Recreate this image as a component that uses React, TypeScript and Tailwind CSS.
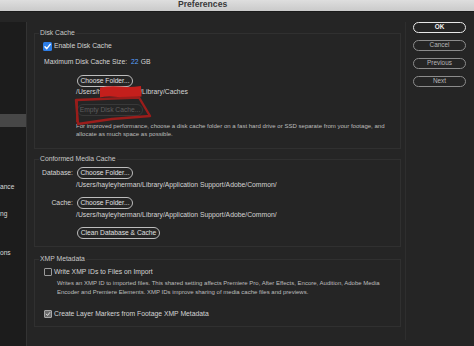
import React from "react";

const Check = ({ color }: { color: string }) => (
  <svg viewBox="0 0 10 10" className="w-full h-full">
    <path d="M2.2 5.2 L4.2 7.4 L8 2.6" fill="none" stroke={color} strokeWidth="1.6" strokeLinecap="round" strokeLinejoin="round" />
  </svg>
);

const Pill = ({ children, w, disabled }: { children: React.ReactNode; w: string; disabled?: boolean }) => (
  <div
    className={`${w} h-[12px] rounded-full border flex items-center justify-center text-[6.7px] leading-none whitespace-nowrap ${
      disabled ? "border-[#383838] text-[#5e5e5e]" : "border-[#bdbdbd] text-[#e0e0e0]"
    }`}
  >
    {children}
  </div>
);

const SideBtn = ({ children, primary }: { children: React.ReactNode; primary?: boolean }) => (
  <div
    className={`w-[53px] h-[11px] rounded-full border flex items-center justify-center text-[6.4px] leading-none ${
      primary ? "border-[#e8e8e8] text-[#f2f2f2] font-bold" : "border-[#8c8c8c] text-[#b8b8b8]"
    }`}
  >
    {children}
  </div>
);

export default function App() {
  return (
    <div
      className="relative w-[474px] h-[346px] overflow-hidden bg-[#252525] flex flex-col"
      style={{ fontFamily: '"Liberation Sans", Arial, sans-serif' }}
    >
      {/* title bar */}
      <div className="h-[12px] shrink-0 bg-gradient-to-b from-[#dedede] to-[#cacaca] border-b border-[#1a1a1a] pl-[178px] text-[8.6px] leading-[9px] font-bold text-[#3a3a3a]">
        Preferences
      </div>

      <div className="flex flex-1 min-h-0">
        {/* sidebar */}
        <div className="w-[27px] shrink-0 mt-[10px] bg-[#1c1c1c] border-r border-[#333] flex flex-col text-[6.6px] text-[#d8d8d8] leading-[12px]">
          <div className="h-[92px]" />
          <div className="h-[13px] bg-[#474747]" />
          <div className="h-[54px]" />
          <div className="h-[12px] whitespace-nowrap">ance</div>
          <div className="h-[15px]" />
          <div className="h-[12px] whitespace-nowrap">ng</div>
          <div className="h-[27px]" />
          <div className="h-[12px] whitespace-nowrap">ons</div>
        </div>

        {/* main panels */}
        <div className="ml-[7px] w-[367px] shrink-0 pt-[16px] flex flex-col text-[6.8px] text-[#d4d4d4]">
          {/* Disk Cache */}
          <fieldset className="border border-[#303030] pl-[4px] pb-[10px]">
            <legend className="px-[1px] leading-[10px] text-[#c8c8c8]">Disk Cache</legend>
            <div className="mt-[3px] ml-[4px] h-[10px] flex items-center gap-[2px]">
              <div className="w-[9px] h-[9px] rounded-[1.5px] bg-[#2d7ee8]">
                <Check color="#ffffff" />
              </div>
              <span className="leading-none">Enable Disk Cache</span>
            </div>
            <div className="mt-[6px] ml-[5px] h-[10px] flex items-center leading-none whitespace-nowrap">
              <span>Maximum Disk Cache Size:</span>
              <span className="ml-[4px] text-[#5aa2ff]">22</span>
              <span className="ml-[2px]">GB</span>
            </div>
            <div className="mt-[8px] ml-[38px]">
              <Pill w="w-[56px]">Choose Folder...</Pill>
            </div>
            <div className="mt-[1px] ml-[37px] h-[8px] leading-[8px] whitespace-nowrap">
              /Users/hayleyherman/Library/Caches
            </div>
            <div className="mt-[8px] ml-[38px]">
              <Pill w="w-[66px]" disabled>
                Empty Disk Cache...
              </Pill>
            </div>
            <div className="mt-[6px] ml-[37px] text-[6.05px] leading-[8px] text-[#bdbdbd] whitespace-nowrap">
              For improved performance, choose a disk cache folder on a fast hard drive or SSD separate from your footage, and
              <br />
              allocate as much space as possible.
            </div>
          </fieldset>

          {/* Conformed Media Cache */}
          <fieldset className="mt-[5px] border border-[#303030] pl-[4px] pb-[7px]">
            <legend className="px-[1px] leading-[10px] text-[#c8c8c8]">Conformed Media Cache</legend>
            <div className="mt-[3px] flex items-center">
              <span className="w-[34px] text-right leading-none">Database:</span>
              <div className="ml-[4px]">
                <Pill w="w-[56px]">Choose Folder...</Pill>
              </div>
            </div>
            <div className="mt-[2px] ml-[37px] h-[8px] leading-[8px] whitespace-nowrap">
              /Users/hayleyherman/Library/Application Support/Adobe/Common/
            </div>
            <div className="mt-[8px] flex items-center">
              <span className="w-[34px] text-right leading-none">Cache:</span>
              <div className="ml-[4px]">
                <Pill w="w-[56px]">Choose Folder...</Pill>
              </div>
            </div>
            <div className="mt-[2px] ml-[37px] h-[8px] leading-[8px] whitespace-nowrap">
              /Users/hayleyherman/Library/Application Support/Adobe/Common/
            </div>
            <div className="mt-[8px] ml-[38px]">
              <Pill w="w-[83px]">Clean Database &amp; Cache</Pill>
            </div>
          </fieldset>

          {/* XMP Metadata */}
          <fieldset className="mt-[7px] border border-[#303030] pl-[4px] pb-[7px]">
            <legend className="px-[1px] leading-[10px] text-[#c8c8c8]">XMP Metadata</legend>
            <div className="mt-[3px] ml-[5px] h-[10px] flex items-center gap-[2px]">
              <div className="w-[8px] h-[8px] rounded-[1px] border border-[#9a9a9a]" />
              <span className="leading-none">Write XMP IDs to Files on Import</span>
            </div>
            <div className="mt-[2px] ml-[18px] text-[6px] leading-[9px] text-[#bdbdbd] whitespace-nowrap">
              Writes an XMP ID to imported files. This shared setting affects Premiere Pro, After Effects, Encore, Audition, Adobe Media
              <br />
              Encoder and Premiere Elements. XMP IDs improve sharing of media cache files and previews.
            </div>
            <div className="mt-[12px] ml-[5px] h-[10px] flex items-center gap-[2px]">
              <div className="w-[8px] h-[8px] rounded-[1px] border border-[#a8a8a8] bg-[#6c6c6c]">
                <Check color="#e4e4e4" />
              </div>
              <span className="leading-none">Create Layer Markers from Footage XMP Metadata</span>
            </div>
          </fieldset>
        </div>

        {/* separator */}
        <div className="ml-[4px] mt-[10px] mb-[6px] w-px bg-[#2e2e2e]" />

        {/* buttons */}
        <div className="ml-[7px] mt-[10px] flex flex-col gap-[7px]">
          <SideBtn primary>OK</SideBtn>
          <SideBtn>Cancel</SideBtn>
          <SideBtn>Previous</SideBtn>
          <SideBtn>Next</SideBtn>
        </div>
      </div>

      {/* red annotations drawn over the screenshot */}
      <svg className="absolute left-0 top-0 pointer-events-none" width="474" height="346" viewBox="0 0 474 346">
        <path
          d="M100 87.5 Q110 85.5 120 86.5 T141 86 L141.5 96.5 Q130 98 118 97 T100 97.5 Z"
          fill="#c41f1c"
        />
        <path
          d="M76 100 L139 97.5 L150 116 L112 119 L78 124 Z"
          fill="none"
          stroke="#9a1d1b"
          strokeWidth="2.4"
          strokeLinejoin="round"
        />
        <path d="M77 101 L77 122" fill="none" stroke="#9a1d1b" strokeWidth="1.8" />
      </svg>
    </div>
  );
}
